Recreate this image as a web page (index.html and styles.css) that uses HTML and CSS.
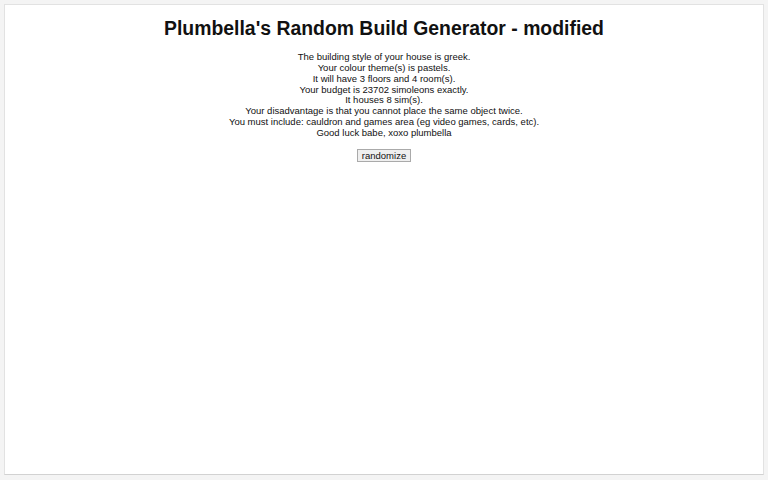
FILE: index.html
```html
<!DOCTYPE html>
<html lang="en">
<head>
    <meta charset="UTF-8">
    <meta name="viewport" content="width=device-width, initial-scale=1.0">
    <title>Random Build Generator</title>
    <link rel="stylesheet" href="styles.css">
</head>
<body>
    <div class="page">
        <h1>Plumbella's Random Build Generator - modified</h1>
        <div class="result" id="result">
            <p>The building style of your house is greek.</p>
            <p>Your colour theme(s) is pastels.</p>
            <p>It will have 3 floors and 4 room(s).</p>
            <p>Your budget is 23702 simoleons exactly.</p>
            <p>It houses 8 sim(s).</p>
            <p>Your disadvantage is that you cannot place the same object twice.</p>
            <p>You must include: cauldron and games area (eg video games, cards, etc).</p>
            <p>Good luck babe, xoxo plumbella</p>
        </div>
        <button type="button">randomize</button>
    </div>
</body>
</html>
```

FILE: styles.css
```css
html {
    background-color: #f4f4f4;
}
body {
    margin: 0;
    padding: 4px;
    font-family: "Liberation Sans", Arial, sans-serif;
    color: #111;
}
.page {
    height: 471px;
    background-color: #fff;
    border: 1px solid #e2e2e2;
    border-bottom-color: #d2d2d2;
    text-align: center;
    box-sizing: border-box;
}
.page h1 {
    font-size: 19.4px;
    margin: 12px 0 12px;
}
.result p {
    margin: 0;
    font-size: 9.5px;
    line-height: 10.86px;
}
button {
    margin-top: 10px;
    font-family: "Liberation Sans", Arial, sans-serif;
    font-size: 9.5px;
    padding: 0 4px;
    background-color: #efefef;
    border: 1px solid #aaa;
    border-radius: 0;
    color: #111;
}
```
